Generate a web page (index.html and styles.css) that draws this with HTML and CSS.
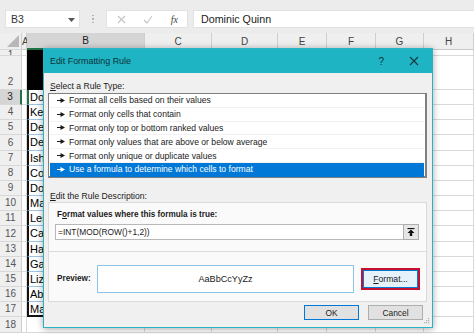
FILE: index.html
```html
<!DOCTYPE html>
<html>
<head>
<meta charset="utf-8">
<link rel="stylesheet" href="styles.css">
</head>
<body>
<div class="app">
  <div class="topbar">
    <div class="namebox"><span>B3</span><svg class="caret" width="7" height="4" viewBox="0 0 7 4"><path d="M0 0h7L3.5 4z" fill="#555"/></svg></div>
    <div class="grip"><i></i><i></i><i></i></div>
    <div class="fxbox">
      <svg width="9" height="9" viewBox="0 0 9 9"><path d="M1 1l7 7M8 1L1 8" stroke="#c4c4c4" stroke-width="1.1" fill="none"/></svg>
      <svg width="10" height="9" viewBox="0 0 10 9"><path d="M1 5l3 3 5-7" stroke="#c4c4c4" stroke-width="1.1" fill="none"/></svg>
      <span class="fx">fx</span>
    </div>
    <div class="formula">Dominic Quinn</div>
  </div>

  <div class="sheet">
    <div class="row hdr">
      <div class="rh corner"><svg width="12" height="12" viewBox="0 0 12 12"><path d="M12 0v12H0z" fill="#b8b8b8"/></svg></div>
      <div class="c ca">A</div><div class="c cb sel">B</div><div class="c cc">C</div><div class="c cd">D</div><div class="c ce">E</div><div class="c cf">F</div><div class="c cg">G</div><div class="c ch">H</div>
    </div>
    <div class="row r1"><div class="rh">1</div><div class="c ca"></div><div class="c cb blk"></div><div class="c cc"></div><div class="c cd"></div><div class="c ce"></div><div class="c cf"></div><div class="c cg"></div><div class="c ch"></div></div>
    <div class="row r2"><div class="rh">2</div><div class="c ca"></div><div class="c cb blk"></div><div class="c cc"></div><div class="c cd"></div><div class="c ce"></div><div class="c cf"></div><div class="c cg"></div><div class="c ch"></div></div>
    <div class="row"><div class="rh cur">3</div><div class="c ca"></div><div class="c cb nm act">Do</div><div class="c cc"></div><div class="c cd"></div><div class="c ce"></div><div class="c cf"></div><div class="c cg"></div><div class="c ch"></div></div>
    <div class="row"><div class="rh">4</div><div class="c ca"></div><div class="c cb nm">Ke</div><div class="c cc"></div><div class="c cd"></div><div class="c ce"></div><div class="c cf"></div><div class="c cg"></div><div class="c ch"></div></div>
    <div class="row"><div class="rh">5</div><div class="c ca"></div><div class="c cb nm">De</div><div class="c cc"></div><div class="c cd"></div><div class="c ce"></div><div class="c cf"></div><div class="c cg"></div><div class="c ch"></div></div>
    <div class="row"><div class="rh">6</div><div class="c ca"></div><div class="c cb nm">De</div><div class="c cc"></div><div class="c cd"></div><div class="c ce"></div><div class="c cf"></div><div class="c cg"></div><div class="c ch"></div></div>
    <div class="row"><div class="rh">7</div><div class="c ca"></div><div class="c cb nm">Ish</div><div class="c cc"></div><div class="c cd"></div><div class="c ce"></div><div class="c cf"></div><div class="c cg"></div><div class="c ch"></div></div>
    <div class="row"><div class="rh">8</div><div class="c ca"></div><div class="c cb nm">Co</div><div class="c cc"></div><div class="c cd"></div><div class="c ce"></div><div class="c cf"></div><div class="c cg"></div><div class="c ch"></div></div>
    <div class="row"><div class="rh">9</div><div class="c ca"></div><div class="c cb nm">Do</div><div class="c cc"></div><div class="c cd"></div><div class="c ce"></div><div class="c cf"></div><div class="c cg"></div><div class="c ch"></div></div>
    <div class="row"><div class="rh">10</div><div class="c ca"></div><div class="c cb nm">Ma</div><div class="c cc"></div><div class="c cd"></div><div class="c ce"></div><div class="c cf"></div><div class="c cg"></div><div class="c ch"></div></div>
    <div class="row"><div class="rh">11</div><div class="c ca"></div><div class="c cb nm">Lei</div><div class="c cc"></div><div class="c cd"></div><div class="c ce"></div><div class="c cf"></div><div class="c cg"></div><div class="c ch"></div></div>
    <div class="row"><div class="rh">12</div><div class="c ca"></div><div class="c cb nm">Cas</div><div class="c cc"></div><div class="c cd"></div><div class="c ce"></div><div class="c cf"></div><div class="c cg"></div><div class="c ch"></div></div>
    <div class="row"><div class="rh">13</div><div class="c ca"></div><div class="c cb nm">Hay</div><div class="c cc"></div><div class="c cd"></div><div class="c ce"></div><div class="c cf"></div><div class="c cg"></div><div class="c ch"></div></div>
    <div class="row"><div class="rh">14</div><div class="c ca"></div><div class="c cb nm">Gav</div><div class="c cc"></div><div class="c cd"></div><div class="c ce"></div><div class="c cf"></div><div class="c cg"></div><div class="c ch"></div></div>
    <div class="row"><div class="rh">15</div><div class="c ca"></div><div class="c cb nm">Liz</div><div class="c cc"></div><div class="c cd"></div><div class="c ce"></div><div class="c cf"></div><div class="c cg"></div><div class="c ch"></div></div>
    <div class="row"><div class="rh">16</div><div class="c ca"></div><div class="c cb nm">Ab</div><div class="c cc"></div><div class="c cd"></div><div class="c ce"></div><div class="c cf"></div><div class="c cg"></div><div class="c ch"></div></div>
    <div class="row"><div class="rh">17</div><div class="c ca"></div><div class="c cb nm last">Ma</div><div class="c cc"></div><div class="c cd"></div><div class="c ce"></div><div class="c cf"></div><div class="c cg"></div><div class="c ch"></div></div>
    <div class="row"><div class="rh">18</div><div class="c ca"></div><div class="c cb"></div><div class="c cc"></div><div class="c cd"></div><div class="c ce"></div><div class="c cf"></div><div class="c cg"></div><div class="c ch"></div></div>
  </div>

  <div class="dialog">
    <div class="title">
      <span class="ttext">Edit Formatting Rule</span>
      <span class="help">?</span>
      <svg class="close" width="10" height="10" viewBox="0 0 10 10"><path d="M1 1l8 8M9 1L1 9" stroke="#16363c" stroke-width="1.1" fill="none"/></svg>
    </div>
    <div class="body">
      <div class="lbl"><u>S</u>elect a Rule Type:</div>
      <div class="list">
        <div class="item"><svg class="arr" width="8" height="5" viewBox="0 0 8 5"><path d="M0 2.5h4" stroke="currentColor" stroke-width="1"/><path d="M3.5 0L8 2.5 3.5 5z" fill="currentColor"/></svg>Format all cells based on their values</div>
        <div class="item"><svg class="arr" width="8" height="5" viewBox="0 0 8 5"><path d="M0 2.5h4" stroke="currentColor" stroke-width="1"/><path d="M3.5 0L8 2.5 3.5 5z" fill="currentColor"/></svg>Format only cells that contain</div>
        <div class="item"><svg class="arr" width="8" height="5" viewBox="0 0 8 5"><path d="M0 2.5h4" stroke="currentColor" stroke-width="1"/><path d="M3.5 0L8 2.5 3.5 5z" fill="currentColor"/></svg>Format only top or bottom ranked values</div>
        <div class="item"><svg class="arr" width="8" height="5" viewBox="0 0 8 5"><path d="M0 2.5h4" stroke="currentColor" stroke-width="1"/><path d="M3.5 0L8 2.5 3.5 5z" fill="currentColor"/></svg>Format only values that are above or below average</div>
        <div class="item"><svg class="arr" width="8" height="5" viewBox="0 0 8 5"><path d="M0 2.5h4" stroke="currentColor" stroke-width="1"/><path d="M3.5 0L8 2.5 3.5 5z" fill="currentColor"/></svg>Format only unique or duplicate values</div>
        <div class="item on"><svg class="arr" width="8" height="5" viewBox="0 0 8 5"><path d="M0 2.5h4" stroke="currentColor" stroke-width="1"/><path d="M3.5 0L8 2.5 3.5 5z" fill="currentColor"/></svg>Use a formula to determine which cells to format</div>
      </div>
      <div class="lbl lbl2"><u>E</u>dit the Rule Description:</div>
      <div class="group">
        <div class="gtop">
          <div class="blbl">F<u>o</u>rmat values where this formula is true:</div>
          <div class="input">
            <span class="ftext">=INT(MOD(ROW()+1,2))</span>
            <span class="collapse"><svg width="8" height="8" viewBox="0 0 8 8"><path d="M0.5 0.5h7" stroke="#111" stroke-width="1.2"/><path d="M4 1.5L7.5 5H5.2v3H2.8V5H0.5z" fill="#111"/></svg></span>
          </div>
        </div>
        <div class="gbot">
          <div class="blbl plbl">Preview:</div>
          <div class="preview">AaBbCcYyZz</div>
          <div class="fmtwrap"><div class="fmtbtn"><u>F</u>ormat...</div></div>
        </div>
      </div>
      <div class="btns">
        <div class="btn ok">OK</div>
        <div class="btn">Cancel</div>
      </div>
    </div>
    <svg class="sizegrip" width="7" height="7" viewBox="0 0 7 7"><g fill="#b0b0b0"><rect x="5" y="0" width="1.2" height="1.2"/><rect x="3" y="2" width="1.2" height="1.2"/><rect x="5" y="2" width="1.2" height="1.2"/><rect x="1" y="4" width="1.2" height="1.2"/><rect x="3" y="4" width="1.2" height="1.2"/><rect x="5" y="4" width="1.2" height="1.2"/></g></svg>
  </div>
</div>
</body>
</html>
```

FILE: styles.css
```css
* { box-sizing: border-box; }
html, body { margin: 0; padding: 0; }
body { width: 474px; height: 334px; overflow: hidden; background: #fff; font-family: "Liberation Sans", Arial, sans-serif; }
.app { position: relative; width: 474px; height: 334px; overflow: hidden; }

.topbar { height: 33px; background: #ececec; display: flex; align-items: flex-start; padding-top: 10px; padding-left: 5px; }
.namebox { width: 75px; height: 18px; background: #fff; border: 1px solid #e2e2e2; display: flex; align-items: center; justify-content: space-between; padding: 0 4px 0 5px; font-size: 10.5px; color: #333; }
.caret { margin-top: 1px; }
.grip { width: 26px; height: 18px; display: flex; flex-direction: column; align-items: center; justify-content: center; gap: 2px; }
.grip i { display: block; width: 1.5px; height: 1.5px; background: #b4b4b4; }
.fxbox { width: 82px; height: 18px; background: #fff; border: 1px solid #e2e2e2; display: flex; align-items: center; justify-content: space-between; padding: 0 9px 0 10px; }
.fx { font-family: "Liberation Serif", serif; font-style: italic; font-size: 10px; color: #444; }
.formula { flex: 1; height: 18px; margin-left: 5px; background: #fff; border: 1px solid #e2e2e2; border-right: none; display: flex; align-items: center; padding-left: 7px; font-size: 10.7px; color: #222; }

.sheet { display: flex; flex-direction: column; }
.row { display: flex; height: 15.17px; }
.row.hdr { height: 17px; }
.row.r1 { height: 6px; }
.row.r2 { height: 34px; }
.rh { width: 22px; flex: none; background: #efefef; border-right: 1px solid #cfcfcf; border-bottom: 1px solid #d8d8d8; color: #555; font-size: 10px; display: flex; align-items: flex-end; justify-content: center; padding-bottom: 1px; overflow: hidden; line-height: 12px; }
.rh.cur { background: #d5d5d5; border-right: 2px solid #217346; color: #222; }
.r1 .rh { align-items: flex-start; padding-top: 0; line-height: 10px; }
.rh.corner { align-items: flex-end; justify-content: flex-end; padding: 0 2px 2px 0; }
.c { flex: none; border-right: 1px solid #dadada; border-bottom: 1px solid #dadada; font-size: 11px; }
.hdr .c { background: #efefef; border-right: 1px solid #cfcfcf; border-bottom: 1px solid #c8c8c8; color: #444; font-size: 10px; display: flex; align-items: center; justify-content: center; }
.hdr .c.sel { background: #d5d5d5; border-bottom: 2px solid #217346; color: #222; }
.ca { width: 5px; }
.hdr .ca { justify-content: flex-start; padding-left: 0; overflow: visible; }
.cb { width: 118px; }
.cc { width: 67px; }
.cd { width: 66px; }
.ce { width: 49px; }
.cf { width: 49px; }
.cg { width: 48px; }
.ch { width: 50px; }
.blk { background: #000; border-color: #000; }
.nm { border-left: 2px solid #111; border-right: 1px solid #9dc3e6; border-bottom: 1px solid #9dc3e6; padding-left: 1px; line-height: 14px; color: #000; overflow: hidden; white-space: nowrap; font-size: 11px; }
.nm.act { border-left: 2px solid #217346; }
.nm.last { border-bottom: 2px solid #111; }

.dialog { position: absolute; left: 43px; top: 48px; width: 390px; height: 280px; background: #f0f0f0; border: 1px solid #2bb3c2; box-shadow: 0 1px 7px rgba(0,0,0,0.35); display: flex; flex-direction: column; font-size: 8.6px; color: #1a1a1a; }
.title { height: 24px; flex: none; background: #1fb4c4; display: flex; align-items: center; padding: 0 13px 0 6px; color: #0e3238; font-size: 8.9px; }
.ttext { flex: 1; }
.help { margin-right: 25px; font-size: 10px; }
.body { flex: 1; display: flex; flex-direction: column; padding: 0 5px 0 4px; }
.lbl { margin-top: 7px; height: 12px; line-height: 12px; padding-left: 2px; }
.lbl2 { margin-top: 12px; }
.list { margin-top: 1px; height: 85px; background: #fff; border: 1px solid #7f7f7f; border-right-width: 2px; border-bottom-width: 2px; padding: 0 1px; }
.item { height: 13.8px; display: flex; align-items: center; padding-left: 7px; gap: 2px; border-bottom: 1px solid #f2f2f2; white-space: nowrap; color: #1a1a1a; }
.item.on { background: #0078d7; color: #fff; border-bottom-color: #0078d7; }
.arr { margin-right: 2px; }
.group { height: 100px; background: #fafafa; border: 1px solid #dadada; display: flex; flex-direction: column; }
.gtop { height: 49px; border-bottom: 1px solid #dadada; padding: 6px 7px 0 6px; }
.blbl { font-weight: bold; font-size: 8.2px; height: 12px; line-height: 12px; padding-left: 2px; }
.input { margin-top: 3px; height: 16px; background: #fff; border: 1px solid #b8b8b8; display: flex; align-items: center; justify-content: space-between; font-size: 8.4px; }
.ftext { padding-left: 2px; }
.collapse { width: 16px; height: 16px; margin: -1px -1px -1px 0; border: 1px solid #adadad; background: #e6e6e6; display: flex; align-items: center; justify-content: center; }
.gbot { flex: 1; display: flex; align-items: center; padding: 4px 6px 0 8px; }
.plbl { width: 40px; padding-left: 0; }
.preview { width: 257px; height: 28px; background: #fff; border: 1px solid #8dc3e6; display: flex; align-items: center; justify-content: center; font-size: 9.1px; }
.fmtwrap { margin-left: 7px; width: 59px; height: 22px; border: 2px solid #c5102e; padding: 0; }
.fmtbtn { height: 100%; background: #e5f1fb; border: 1px solid #0078d7; display: flex; align-items: center; justify-content: center; }
.btns { margin-top: 3px; display: flex; justify-content: flex-end; gap: 9px; padding-right: 4px; }
.btn { width: 55px; height: 15px; background: #e1e1e1; border: 1px solid #adadad; display: flex; align-items: center; justify-content: center; font-size: 8.4px; }
.btn.ok { border: 1px solid #0078d7; }
.sizegrip { position: absolute; right: 2px; bottom: 2px; }
```
